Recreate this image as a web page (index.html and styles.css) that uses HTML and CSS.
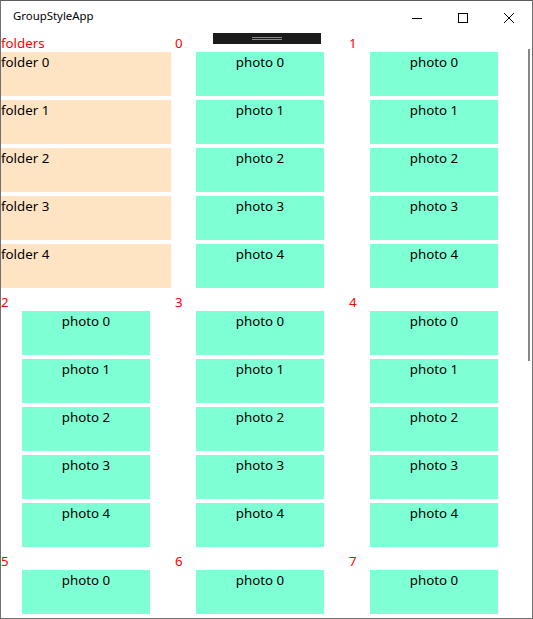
FILE: index.html
```html
<!DOCTYPE html>
<html lang="en">
<head>
<meta charset="utf-8">
<title>GroupStyleApp</title>
<link rel="stylesheet" href="styles.css">
</head>
<body>
<div class="window">
  <div class="titlebar">
    <span class="title">GroupStyleApp</span>
    <div class="caption">
      <div class="cbtn"><svg width="10" height="10" viewBox="0 0 10 10"><line x1="0" y1="5.5" x2="10" y2="5.5" stroke="#000" stroke-width="1"/></svg></div>
      <div class="cbtn"><svg width="10" height="10" viewBox="0 0 10 10"><rect x="0.5" y="0.5" width="9" height="9" fill="none" stroke="#000" stroke-width="1"/></svg></div>
      <div class="cbtn"><svg width="10" height="10" viewBox="0 0 10 10"><path d="M0 0 L10 10 M10 0 L0 10" stroke="#000" stroke-width="1"/></svg></div>
    </div>
  </div>
  <div class="content">
    <div class="groups">
      <div class="group folders">
        <div class="ghead">folders</div>
        <div class="tile folder">folder 0</div>
        <div class="tile folder">folder 1</div>
        <div class="tile folder">folder 2</div>
        <div class="tile folder">folder 3</div>
        <div class="tile folder">folder 4</div>
      </div>
      <div class="group">
        <div class="ghead">0</div>
        <div class="tile photo">photo 0</div>
        <div class="tile photo">photo 1</div>
        <div class="tile photo">photo 2</div>
        <div class="tile photo">photo 3</div>
        <div class="tile photo">photo 4</div>
      </div>
      <div class="group">
        <div class="ghead">1</div>
        <div class="tile photo">photo 0</div>
        <div class="tile photo">photo 1</div>
        <div class="tile photo">photo 2</div>
        <div class="tile photo">photo 3</div>
        <div class="tile photo">photo 4</div>
      </div>
      <div class="group">
        <div class="ghead">2</div>
        <div class="tile photo">photo 0</div>
        <div class="tile photo">photo 1</div>
        <div class="tile photo">photo 2</div>
        <div class="tile photo">photo 3</div>
        <div class="tile photo">photo 4</div>
      </div>
      <div class="group">
        <div class="ghead">3</div>
        <div class="tile photo">photo 0</div>
        <div class="tile photo">photo 1</div>
        <div class="tile photo">photo 2</div>
        <div class="tile photo">photo 3</div>
        <div class="tile photo">photo 4</div>
      </div>
      <div class="group">
        <div class="ghead">4</div>
        <div class="tile photo">photo 0</div>
        <div class="tile photo">photo 1</div>
        <div class="tile photo">photo 2</div>
        <div class="tile photo">photo 3</div>
        <div class="tile photo">photo 4</div>
      </div>
      <div class="group">
        <div class="ghead">5</div>
        <div class="tile photo">photo 0</div>
      </div>
      <div class="group">
        <div class="ghead">6</div>
        <div class="tile photo">photo 0</div>
      </div>
      <div class="group">
        <div class="ghead">7</div>
        <div class="tile photo">photo 0</div>
      </div>
    </div>
    <div class="drag-handle"><span class="grip"></span></div>
    <div class="scrollbar"></div>
  </div>
</div>
</body>
</html>
```
FILE: styles.css
```css
html, body {
  margin: 0;
  padding: 0;
  background: #ffffff;
}
body {
  font-family: "Noto Sans", "Open Sans", sans-serif;
}
.window {
  width: 533px;
  height: 619px;
  box-sizing: border-box;
  border: 1px solid #707070;
  border-top-color: #5c5c5c;
  background: #ffffff;
  display: flex;
  flex-direction: column;
  overflow: hidden;
}
.titlebar {
  height: 32px;
  flex: 0 0 32px;
  display: flex;
  align-items: flex-start;
  justify-content: space-between;
}
.title {
  font-size: 11.4px;
  line-height: 16px;
  padding: 7px 0 0 12px;
  color: #000000;
}
.caption {
  display: flex;
}
.cbtn {
  width: 46px;
  height: 30px;
  display: flex;
  align-items: center;
  justify-content: center;
  padding-top: 2px;
}
.cbtn svg {
  display: block;
}
.content {
  flex: 1 1 auto;
  position: relative;
  overflow: hidden;
}
.groups {
  display: grid;
  grid-template-columns: repeat(3, 174px);
  grid-auto-rows: 259px;
}
.group {
  display: flex;
  flex-direction: column;
}
.ghead {
  height: 19px;
  box-sizing: border-box;
  padding-top: 1px;
  font-size: 13.3px;
  line-height: 19px;
  color: #ff0000;
}
.tile {
  height: 44px;
  flex: 0 0 44px;
  box-sizing: border-box;
  padding-top: 1px;
  margin-bottom: 4px;
  font-size: 13.3px;
  line-height: 19px;
  color: #000000;
}
.folder {
  width: 170px;
  background: #ffe4c4;
}
.photo {
  width: 128px;
  margin-left: 21px;
  background: #7fffd4;
  text-align: center;
}
.drag-handle {
  position: absolute;
  left: 212px;
  top: 0;
  width: 108px;
  height: 11px;
  background: #1b1b1b;
  display: flex;
  justify-content: center;
  padding-top: 4px;
  box-sizing: border-box;
}
.grip {
  display: block;
  width: 30px;
  height: 3px;
  box-sizing: border-box;
  border-top: 1px solid #8a8a8a;
  border-bottom: 1px solid #8a8a8a;
}
.scrollbar {
  position: absolute;
  left: 527px;
  top: 16px;
  width: 2px;
  height: 312px;
  background: #868686;
}
```
